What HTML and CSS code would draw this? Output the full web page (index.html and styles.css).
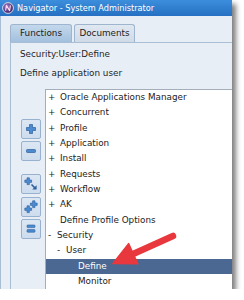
FILE: index.html
```html
<!DOCTYPE html>
<html>
<head>
<meta charset="utf-8">
<link rel="stylesheet" href="styles.css">
</head>
<body>
<div class="window">
  <div class="titlebar">
    <svg class="appicon" width="12" height="12" viewBox="0 0 12 12">
      <defs>
        <radialGradient id="g" cx="40%" cy="35%" r="65%">
          <stop offset="0" stop-color="#9a7cc8"/>
          <stop offset="1" stop-color="#3a2266"/>
        </radialGradient>
      </defs>
      <circle cx="6" cy="6" r="5.4" fill="url(#g)" stroke="#e8e4f2" stroke-width="0.9"/>
      <path d="M3.6 8.6 L4.4 3.4 L7.6 8.6 L8.4 3.4" fill="none" stroke="#ffd6ea" stroke-width="1.1" stroke-linejoin="round"/>
    </svg>
    <span>Navigator - System Administrator</span>
  </div>
  <div class="body">
    <div class="tabs">
      <div class="tab active">Functions</div>
      <div class="tab">Documents</div>
    </div>
    <div class="panel">
      <div class="line">Security:User:Define</div>
      <div class="line">Define application user</div>
      <div class="main">
        <div class="tools">
          <div class="btn b1">
            <svg width="12" height="12" viewBox="0 0 12 12"><path d="M4.5 1.5h3v3h3v3h-3v3h-3v-3h-3v-3h3z" fill="#4d8bd0" stroke="#2c5f9e" stroke-width="0.7"/></svg>
          </div>
          <div class="btn b2">
            <svg width="12" height="12" viewBox="0 0 12 12"><rect x="1.5" y="4.5" width="9" height="3" rx="0.8" fill="#4d8bd0" stroke="#2c5f9e" stroke-width="0.7"/></svg>
          </div>
          <div class="btn b3">
            <svg width="14" height="14" viewBox="0 0 14 14">
              <path d="M3 0.8h2.4v2.2h2.2v2.4h-2.2v2.2h-2.4v-2.2h-2.2v-2.4h2.2z" fill="#4d8bd0" stroke="#2c5f9e" stroke-width="0.6"/>
              <path d="M7.5 7.5 L11 11" stroke="#2c5f9e" stroke-width="1.6"/>
              <path d="M12.6 8.2 L12.6 12.6 L8.2 12.6 Z" fill="#2c5f9e"/>
            </svg>
          </div>
          <div class="btn b4">
            <svg width="14" height="14" viewBox="0 0 14 14">
              <path d="M8.6 0.8h2.4v2.2h2.2v2.4h-2.2v2.2h-2.4v-2.2h-2.2v-2.4h2.2z" fill="#4d8bd0" stroke="#2c5f9e" stroke-width="0.6"/>
              <path d="M3 5.8h2.4v2.2h2.2v2.4h-2.2v2.2h-2.4v-2.2h-2.2v-2.4h2.2z" fill="#4d8bd0" stroke="#2c5f9e" stroke-width="0.6"/>
            </svg>
          </div>
          <div class="btn b5">
            <svg width="12" height="12" viewBox="0 0 12 12">
              <rect x="2" y="2" width="8" height="2.6" rx="0.7" fill="#4d8bd0" stroke="#2c5f9e" stroke-width="0.6"/>
              <rect x="2" y="6.6" width="8" height="2.6" rx="0.7" fill="#4d8bd0" stroke="#2c5f9e" stroke-width="0.6"/>
            </svg>
          </div>
        </div>
        <div class="tree">
          <div class="row l0"><span class="sign plus">+</span>Oracle Applications Manager</div>
          <div class="row l0"><span class="sign plus">+</span>Concurrent</div>
          <div class="row l0"><span class="sign plus">+</span>Profile</div>
          <div class="row l0"><span class="sign plus">+</span>Application</div>
          <div class="row l0"><span class="sign plus">+</span>Install</div>
          <div class="row l0"><span class="sign plus">+</span>Requests</div>
          <div class="row l0"><span class="sign plus">+</span>Workflow</div>
          <div class="row l0"><span class="sign plus">+</span>AK</div>
          <div class="row l0 leaf">Define Profile Options</div>
          <div class="row l0"><span class="sign minus">-</span>Security</div>
          <div class="row l1"><span class="sign minus">-</span>User</div>
          <div class="row l2 selected">Define</div>
          <div class="row l2">Monitor</div>
        </div>
      </div>
    </div>
  </div>
</div>
<svg class="arrow" width="244" height="300" viewBox="0 0 244 300">
  <g fill="#e8383d" stroke="#e8383d">
    <line x1="173" y1="236" x2="132" y2="254.5" stroke-width="6.5" stroke-linecap="round"/>
    <polygon points="113,263.5 128.6,243.6 137.8,263.8" stroke-width="1.5" stroke-linejoin="round"/>
  </g>
</svg>
</body>
</html>
```

FILE: styles.css
```css
body {
  margin: 0;
  background: #ffffff;
  font-family: "DejaVu Sans", sans-serif;
  font-size: 8.8px;
  color: #1f1f1f;
}

.window {
  width: 232px;
  height: 289px;
  display: flex;
  flex-direction: column;
  overflow: hidden;
  background: #e8eef6;
  box-shadow: 4px 4px 5px rgba(0, 0, 0, 0.5);
}

.titlebar {
  height: 16px;
  flex: none;
  display: flex;
  align-items: center;
  gap: 3px;
  padding-left: 2px;
  background: linear-gradient(#3c8edc, #2570c2);
  color: #ffffff;
  font-size: 8.2px;
}

.appicon {
  display: block;
  flex: none;
}

.body {
  flex: 1;
  display: flex;
  flex-direction: column;
  border-left: 1px solid #aabed6;
  background: #e8eef6;
  min-height: 0;
}

.tabs {
  display: flex;
  align-items: flex-end;
  height: 18px;
  margin-top: 8px;
  padding-left: 9px;
  gap: 2px;
  flex: none;
}

.tab {
  box-sizing: border-box;
  height: 18px;
  line-height: 17px;
  text-align: center;
  border: 1px solid #9fb5cd;
  border-bottom: none;
  border-radius: 3px 3px 0 0;
  color: #222;
}

.tab.active {
  width: 62px;
  background: linear-gradient(#c4d8ec, #a2c0de);
}

.tab:not(.active) {
  width: 61px;
  background: linear-gradient(#e0e8f1, #d0dbe8);
}

.panel {
  flex: 1;
  display: flex;
  flex-direction: column;
  margin-left: 9px;
  border-top: 1px solid #a9bdd3;
  border-left: 1px solid #a9bdd3;
  padding-top: 2px;
  min-height: 0;
}

.line {
  height: 19px;
  line-height: 19px;
  padding-left: 9px;
  white-space: nowrap;
}

.main {
  flex: 1;
  display: flex;
  margin-top: 6px;
  min-height: 0;
}

.tools {
  flex: none;
  width: 20px;
  margin-left: 10px;
  margin-right: 4px;
  padding-top: 30px;
  display: flex;
  flex-direction: column;
}

.btn {
  box-sizing: border-box;
  height: 20px;
  display: flex;
  align-items: center;
  justify-content: center;
  background: linear-gradient(#dce7f3, #cddcee);
  border: 1px solid #97b1cf;
  border-radius: 2px;
}

.b2 { margin-top: 2px; }
.b3 { margin-top: 13px; }
.b4 { margin-top: 3px; }
.b5 { margin-top: 2px; }

.tree {
  flex: 1;
  background: #ffffff;
  border-top: 1px solid #a4aeba;
  border-left: 1px solid #a4aeba;
  overflow: hidden;
}

.row {
  height: 15.33px;
  line-height: 15.33px;
  white-space: nowrap;
  color: #222;
}

.sign {
  display: inline-block;
}

.sign.plus { width: 12px; }
.sign.minus { width: 9px; }

.l0 { padding-left: 2px; }
.l0.leaf { padding-left: 14px; }
.l1 { padding-left: 11px; }
.l2 { padding-left: 32px; }

.row.selected {
  background: #4a6891;
  color: #ffffff;
}

.arrow {
  position: absolute;
  left: 0;
  top: 0;
  pointer-events: none;
}
```
